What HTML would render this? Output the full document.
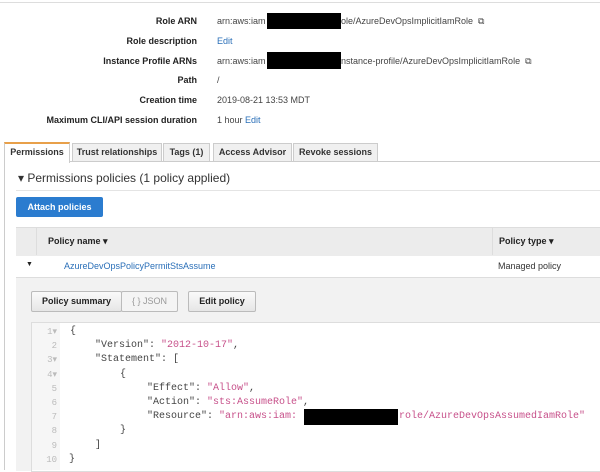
<!DOCTYPE html>
<html><head><style>
body{margin:0;width:600px;height:470px;overflow:hidden;background:#fff;font-family:"Liberation Sans",Arial,sans-serif;position:relative;color:#222}
.a{position:absolute;white-space:nowrap}
.lab{font-size:9px;font-weight:bold;text-align:right;width:197px;left:0}
.val{font-size:9px;color:#444}
.lnk{color:#2a6fb8}
.red{position:absolute;background:#000}
.tab{position:absolute;top:143px;height:17px;border:1px solid #ccc;border-bottom:none;background:#f0f0f0;font-size:9px;font-weight:bold;text-align:center;line-height:17px;color:#333}
.btn{position:absolute;top:291px;height:19px;border:1px solid #bbb;background:linear-gradient(#fafafa,#e6e6e6);font-size:9px;font-weight:bold;text-align:center;line-height:19px;border-radius:2px;color:#222}
.code{font-family:"Liberation Mono",monospace;font-size:10px;color:#444;line-height:12px}
.s{color:#c7508a}
.ln{position:absolute;left:31px;width:26px;text-align:right;font-family:"Liberation Mono",monospace;font-size:9px;color:#bbb;line-height:12px}
</style></head><body>
<div class="a" style="left:0;top:2px;width:600px;height:1px;background:#ddd"></div>
<div class="a lab" style="top:16px">Role ARN</div>
<div class="a val" style="left:217px;top:16px">arn:aws:iam</div>
<div class="a val" style="left:341px;top:16px">ole/AzureDevOpsImplicitIamRole &nbsp;⧉</div>
<div class="red" style="left:267px;top:13px;width:74px;height:16px"></div>
<div class="a lab" style="top:36px">Role description</div><div class="a val lnk" style="left:217px;top:36px">Edit</div>
<div class="a lab" style="top:56px">Instance Profile ARNs</div>
<div class="a val" style="left:217px;top:56px">arn:aws:iam</div>
<div class="a val" style="left:341px;top:56px">nstance-profile/AzureDevOpsImplicitIamRole &nbsp;⧉</div>
<div class="red" style="left:267px;top:52px;width:74px;height:17px"></div>
<div class="a lab" style="top:75px">Path</div><div class="a val" style="left:217px;top:75px">/</div>
<div class="a lab" style="top:95px">Creation time</div><div class="a val" style="left:217px;top:95px">2019-08-21 13:53 MDT</div>
<div class="a lab" style="top:115px">Maximum CLI/API session duration</div><div class="a val" style="left:217px;top:115px">1 hour <span class="lnk">Edit</span></div>

<div class="a" style="left:4px;top:161px;width:596px;height:1px;background:#ccc"></div>
<div class="a" style="left:4px;top:161px;width:1px;height:309px;background:#ccc"></div>
<div class="tab" style="left:4px;width:64px;background:#fff;border-top:2px solid #e8a04a;top:142px;height:19px">Permissions</div>
<div class="tab" style="left:72px;width:88px">Trust relationships</div>
<div class="tab" style="left:163px;width:45px">Tags (1)</div>
<div class="tab" style="left:213px;width:77px">Access Advisor</div>
<div class="tab" style="left:293px;width:83px">Revoke sessions</div>

<div class="a" style="left:18px;top:171px;font-size:12px;color:#333">▾ Permissions policies (1 policy applied)</div>
<div class="a" style="left:16px;top:190px;width:584px;height:1px;background:#e4e4e4"></div>
<div class="a" style="left:16px;top:197px;width:87px;height:20px;background:#2b7ccf;border-radius:2px;color:#fff;font-size:9px;font-weight:bold;text-align:center;line-height:20px">Attach policies</div>

<div class="a" style="left:16px;top:227px;width:584px;height:28px;background:#ececec;border-top:1px solid #ddd"></div>
<div class="a" style="left:36px;top:227px;width:1px;height:28px;background:#ddd"></div>
<div class="a" style="left:492px;top:227px;width:1px;height:28px;background:#ddd"></div>
<div class="a" style="left:48px;top:236px;font-size:9px;font-weight:bold">Policy name ▾</div>
<div class="a" style="left:499px;top:236px;font-size:9px;font-weight:bold">Policy type ▾</div>
<div class="a" style="left:26px;top:261px;font-size:7px">▼</div>
<div class="a lnk" style="left:64px;top:261px;font-size:9px">AzureDevOpsPolicyPermitStsAssume</div>
<div class="a" style="left:498px;top:261px;font-size:9px;color:#333">Managed policy</div>
<div class="a" style="left:16px;top:277px;width:584px;height:193px;background:#f2f2f2;border-top:1px solid #ddd"></div>
<div class="btn" style="left:31px;width:89px">Policy summary</div>
<div class="btn" style="left:121px;width:55px;background:#f4f4f4;color:#999;font-weight:normal">{ } JSON</div>
<div class="btn" style="left:188px;width:66px">Edit policy</div>
<div class="a" style="left:31px;top:322px;width:569px;height:148px;background:#fff;border:1px solid #ddd"></div>
<div class="a" style="left:32px;top:323px;width:28px;height:147px;background:#f6f6f6"></div>
<div class="ln" style="top:326px">1▾</div><div class="ln" style="top:340px">2</div><div class="ln" style="top:354px">3▾</div><div class="ln" style="top:369px">4▾</div><div class="ln" style="top:383px">5</div><div class="ln" style="top:397px">6</div><div class="ln" style="top:411px">7</div><div class="ln" style="top:425px">8</div><div class="ln" style="top:440px">9</div><div class="ln" style="top:454px">10</div>
<div class="a code" style="left:70px;top:326px">{</div>
<div class="a code" style="left:95px;top:340px">"Version": <span class="s">"2012-10-17"</span>,</div>
<div class="a code" style="left:95px;top:354px">"Statement": [</div>
<div class="a code" style="left:120px;top:369px">{</div>
<div class="a code" style="left:147px;top:383px">"Effect": <span class="s">"Allow"</span>,</div>
<div class="a code" style="left:147px;top:397px">"Action": <span class="s">"sts:AssumeRole"</span>,</div>
<div class="a code" style="left:147px;top:411px">"Resource": <span class="s">"arn:aws:iam:</span></div>
<div class="a code s" style="left:399px;top:411px">role/AzureDevOpsAssumedIamRole"</div>
<div class="red" style="left:304px;top:409px;width:94px;height:16px"></div>
<div class="a code" style="left:120px;top:425px">}</div>
<div class="a code" style="left:95px;top:440px">]</div>
<div class="a code" style="left:69px;top:454px">}</div>
</body></html>
